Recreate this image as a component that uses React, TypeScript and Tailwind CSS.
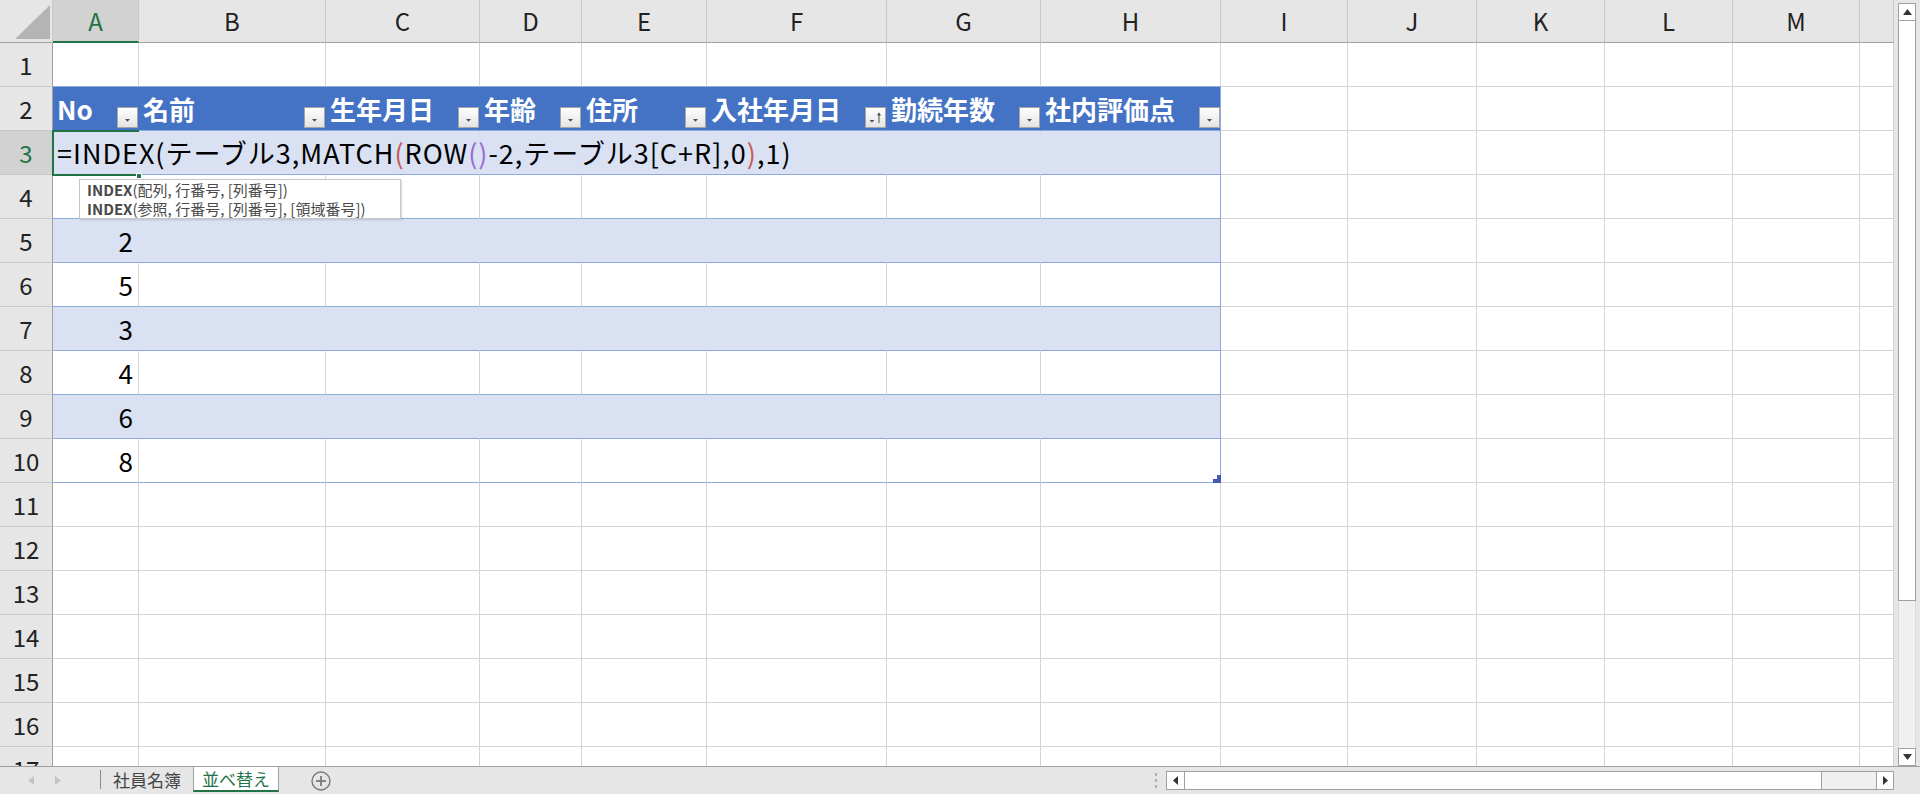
import React from "react";

const TPL =
  "grid grid-cols-[53px_86px_187px_154px_102px_125px_180px_154px_180px_127px_129px_128px_128px_127px_34px]";

const letters = ["A", "B", "C", "D", "E", "F", "G", "H", "I", "J", "K", "L", "M", ""];

const headers = ["No", "名前", "生年月日", "年齢", "住所", "入社年月日", "勤続年数", "社内評価点"];

// value in column A per row
const colA: Record<number, string> = { 5: "2", 6: "5", 7: "3", 8: "4", 9: "6", 10: "8" };

const rows = Array.from({ length: 17 }, (_, i) => i + 1);

function FilterButton({ sorted = false }: { sorted?: boolean }) {
  return (
    <div className="absolute right-0 bottom-[2px] w-[21px] h-[21px] border border-[#a5a5a5] bg-linear-to-b from-[#ffffff] to-[#e4e4e4]">
      <svg width="19" height="19" viewBox="0 0 19 19" className="block">
        {sorted ? (
          <>
            <polygon points="3.5,12 8.5,12 6,14.5" fill="#505050" />
            <line x1="13" y1="5" x2="13" y2="15" stroke="#505050" strokeWidth="1" />
            <polygon points="11,7.5 15,7.5 13,4.5" fill="#505050" />
          </>
        ) : (
          <polygon points="7,11 12,11 9.5,13.7" fill="#505050" />
        )}
      </svg>
    </div>
  );
}

function cellClass(r: number, c: number) {
  const inTable = r >= 2 && r <= 10 && c <= 7;
  const last = c === 7;
  if (inTable && r === 2) {
    return last
      ? "relative bg-[#4472c4] border-r border-b border-r-[#8ea9db] border-b-[#8ea9db]"
      : "relative bg-[#4472c4] border-r border-b border-r-[#4472c4] border-b-[#8ea9db]";
  }
  if (inTable && r % 2 === 1) {
    return last
      ? "relative bg-[#d9e1f2] border-r border-b border-r-[#8ea9db] border-b-[#8ea9db]"
      : "relative bg-[#d9e1f2] border-r border-b border-r-[#d9e1f2] border-b-[#8ea9db]";
  }
  if (inTable) {
    return last
      ? "relative bg-white border-r border-b border-r-[#8ea9db] border-b-[#8ea9db]"
      : "relative bg-white border-r border-b border-r-[#d4d4d4] border-b-[#8ea9db]";
  }
  if (r === 1 && c <= 7) {
    return "relative bg-white border-r border-b border-r-[#d4d4d4] border-b-[#8ea9db]";
  }
  return "relative bg-white border-r border-b border-r-[#d4d4d4] border-b-[#d4d4d4]";
}

function FormulaCell() {
  return (
    <div className="relative z-10 h-full flex items-center pl-[4px] whitespace-nowrap text-[27px] tracking-[1px] leading-none text-black">
      <span>
        =INDEX(テーブル3,MATCH<span className="text-[#c65b58]">(</span>ROW
        <span className="text-[#9a6ad0]">()</span>-2,テーブル3[C+R],0
        <span className="text-[#c65b58]">)</span>,1)
      </span>
      <div className="absolute left-[-1px] top-[-1px] w-[87px] h-[46px] border-2 border-r-0 border-[#217346]" />
      <div className="absolute left-[83px] top-[42px] w-[6px] h-[6px] bg-[#217346] border border-white" />
    </div>
  );
}

function Grid() {
  return (
    <div className="relative w-[1894px] h-[766px] overflow-hidden">
      {/* column header */}
      <div className={`${TPL} h-[43px]`}>
        <div className="bg-[#e6e6e6] border-r border-b border-r-[#c8c8c8] border-b-[#a0a0a0]">
          <svg width="53" height="42" viewBox="0 0 53 42" className="block">
            <polygon points="50,5 50,39 15,39" fill="#b4b4b4" />
          </svg>
        </div>
        {letters.map((l, i) =>
          i === 0 ? (
            <div
              key={i}
              className="bg-[#d2d2d2] border-r border-r-[#c8c8c8] border-b-2 border-b-[#217346] flex items-center justify-center text-[24px] text-[#217346]"
            >
              {l}
            </div>
          ) : (
            <div
              key={i}
              className="bg-[#e6e6e6] border-r border-b border-r-[#c8c8c8] border-b-[#a0a0a0] flex items-center justify-center text-[24px] text-[#222]"
            >
              {l}
            </div>
          )
        )}
      </div>

      {rows.map((r) => (
        <div key={r} className={`${TPL} h-[44px]`}>
          {r === 3 ? (
            <div className="bg-[#d2d2d2] border-r border-b border-r-[#217346] border-b-[#c8c8c8] flex items-center justify-center text-[24px] text-[#217346]">
              {r}
            </div>
          ) : (
            <div className="bg-[#e6e6e6] border-r border-b border-r-[#a0a0a0] border-b-[#c8c8c8] flex items-center justify-center text-[24px] text-[#222]">
              {r}
            </div>
          )}
          {letters.map((_, c) => (
            <div key={c} className={cellClass(r, c)}>
              {r === 2 && c <= 7 && (
                <>
                  <div className="h-full flex items-center pl-[4px] text-[26px] font-bold text-white leading-none whitespace-nowrap">
                    {headers[c]}
                  </div>
                  <FilterButton sorted={c === 5} />
                </>
              )}
              {r === 3 && c === 0 && <FormulaCell />}
              {c === 0 && colA[r] && (
                <div className="h-full flex items-center justify-end pr-[5px] text-[26px] leading-none text-black">
                  {colA[r]}
                </div>
              )}
              {r === 10 && c === 7 && (
                <>
                  <div className="absolute right-[-1px] bottom-[-1px] w-[8px] h-[4px] bg-[#4459b5]" />
                  <div className="absolute right-[-1px] bottom-[-1px] w-[4px] h-[8px] bg-[#4459b5]" />
                </>
              )}
            </div>
          ))}
        </div>
      ))}

      {/* function tooltip */}
      <div className="absolute z-20 left-[79px] top-[179px] w-[322px] h-[40px] bg-white border border-[#c6c6c6] shadow-[1px_1px_2px_rgba(0,0,0,0.15)] pl-[7px] text-[15px] leading-[19px] text-[#4a4a4a] whitespace-nowrap">
        <div>
          <span className="font-bold">INDEX</span>(配列, 行番号, [列番号])
        </div>
        <div>
          <span className="font-bold">INDEX</span>(参照, 行番号, [列番号], [領域番号])
        </div>
      </div>
    </div>
  );
}

function VScroll() {
  return (
    <div className="w-[26px] h-[766px] bg-[#e6e6e6] pl-[4px] pt-[3px]">
      <div className="w-[18px] h-[763px] flex flex-col">
        <div className="h-[18px] border border-[#a0a0a0] bg-white flex items-center justify-center">
          <svg width="9" height="6" viewBox="0 0 9 6">
            <polygon points="0,6 9,6 4.5,0" fill="#333" />
          </svg>
        </div>
        <div className="h-[580px] border border-t-0 border-[#a0a0a0] bg-white" />
        <div className="flex-1 bg-[#f0f0f0] border-x border-[#d8d8d8]" />
        <div className="h-[18px] border border-[#a0a0a0] bg-white flex items-center justify-center">
          <svg width="9" height="6" viewBox="0 0 9 6">
            <polygon points="0,0 9,0 4.5,6" fill="#333" />
          </svg>
        </div>
      </div>
    </div>
  );
}

function BottomBar() {
  return (
    <div className="flex h-[28px] bg-[#e6e6e6] border-t border-[#9f9f9f]">
      <div className="w-[100px] flex items-center">
        <svg width="6" height="9" viewBox="0 0 6 9" className="ml-[28px]">
          <polygon points="6,0 6,9 0,4.5" fill="#c4c4c4" />
        </svg>
        <svg width="6" height="9" viewBox="0 0 6 9" className="ml-[21px]">
          <polygon points="0,0 0,9 6,4.5" fill="#c4c4c4" />
        </svg>
      </div>
      <div className="w-px h-[19px] mt-[3px] bg-[#8a8a8a]" />
      <div className="w-[92px] flex items-center justify-center text-[17px] text-[#444] pb-[2px]">
        社員名簿
      </div>
      <div className="w-[86px] h-[25px] bg-white border-x border-[#9f9f9f] border-b-2 border-b-[#217346] flex items-center justify-center text-[17px] text-[#217346]">
        並べ替え
      </div>
      <div className="ml-[32px] flex items-center">
        <svg width="20" height="20" viewBox="0 0 20 20">
          <circle cx="10" cy="10" r="9" fill="none" stroke="#7a7a7a" strokeWidth="1.4" />
          <line x1="5" y1="10" x2="15" y2="10" stroke="#7a7a7a" strokeWidth="1.8" />
          <line x1="10" y1="5" x2="10" y2="15" stroke="#7a7a7a" strokeWidth="1.8" />
        </svg>
      </div>
      <div className="flex-1" />
      <div className="w-[774px] flex items-center">
        <div className="w-[20px] h-full flex flex-col items-center justify-center gap-[3px]">
          <div className="w-[2px] h-[3px] bg-[#b0b0b0]" />
          <div className="w-[2px] h-[3px] bg-[#b0b0b0]" />
          <div className="w-[2px] h-[3px] bg-[#b0b0b0]" />
        </div>
        <div className="w-[728px] h-[19px] border border-[#a0a0a0] flex">
          <div className="w-[18px] border-r border-[#a0a0a0] bg-white flex items-center justify-center">
            <svg width="5" height="9" viewBox="0 0 5 9">
              <polygon points="5,0 5,9 0,4.5" fill="#333" />
            </svg>
          </div>
          <div className="w-[637px] bg-white border-r border-[#a0a0a0]" />
          <div className="flex-1 bg-[#f0f0f0]" />
          <div className="w-[17px] border-l border-[#a0a0a0] bg-white flex items-center justify-center">
            <svg width="5" height="9" viewBox="0 0 5 9">
              <polygon points="0,0 0,9 5,4.5" fill="#333" />
            </svg>
          </div>
        </div>
        <div className="w-[26px]" />
      </div>
    </div>
  );
}

export default function App() {
  return (
    <div
      className="w-[1920px] h-[794px] overflow-hidden bg-white flex flex-col"
      style={{ fontFamily: "'Noto Sans CJK JP', 'Noto Sans', sans-serif" }}
    >
      <div className="flex">
        <Grid />
        <VScroll />
      </div>
      <BottomBar />
    </div>
  );
}
